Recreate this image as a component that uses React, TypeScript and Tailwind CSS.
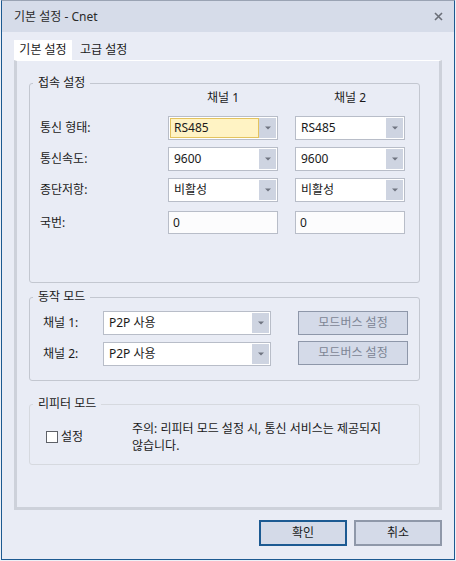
const FONT = "font-['Noto_Sans','Noto_Sans_CJK_KR',sans-serif]";

function Arrow() {
  return (
    <svg width="6" height="4" viewBox="0 0 6 4" className="block">
      <path d="M0 0.5h6L3 3.5z" fill="#6f7480" />
    </svg>
  );
}

function Combo({ value, width, highlight }: { value: string; width: string; highlight?: boolean }) {
  return (
    <div className={`${width} h-[24px] shrink-0 flex border border-[#b8bdc8] bg-white p-px`}>
      <div
        className={
          highlight
            ? "flex-1 flex items-center px-[3px] bg-[#fff3c4] border border-[#e3c35f]"
            : "flex-1 flex items-center px-[4px]"
        }
      >
        {value}
      </div>
      <div className="w-[17px] bg-[#ced4e1] flex items-center justify-center">
        <Arrow />
      </div>
    </div>
  );
}

function TextBox({ value }: { value: string }) {
  return (
    <div className="w-[110px] h-[23px] shrink-0 flex items-center border border-[#b8bdc8] bg-[#fcfcfd] px-[4px]">
      {value}
    </div>
  );
}

function Group({ title, className, children }: { title: string; className: string; children: React.ReactNode }) {
  return (
    <fieldset className={`w-[391px] rounded-[3px] border ${className}`}>
      <legend className="ml-[3px] px-[5px] leading-[16px]">{title}</legend>
      {children}
    </fieldset>
  );
}

const channelRows = [
  { label: "통신 형태:", a: "RS485", b: "RS485", hl: true },
  { label: "통신속도:", a: "9600", b: "9600" },
  { label: "종단저항:", a: "비활성", b: "비활성" },
];

export default function App() {
  return (
    <div className={`w-[456px] h-[561px] bg-[#eef1f7] text-[12px] text-[#1a1a1a] ${FONT}`}>
      <div className="ml-px w-[454px] h-[560px] flex flex-col border-x border-b border-t border-t-[#9aa3b3] border-x-[#1d5a91] border-b-[#1d5a91]">
        <div className="h-[31px] shrink-0 bg-[#d6dce9] flex items-center justify-between pl-[12px] pr-[11px] text-[#2a2a2a]">
          <span>기본 설정 - Cnet</span>
          <svg width="9" height="9" viewBox="0 0 9 9">
            <path d="M1 1l7 7M8 1L1 8" stroke="#6b6f78" strokeWidth="1.6" />
          </svg>
        </div>

        <div className="flex-1 bg-[#e9ecf5] pl-[12px] pt-[8px]">
          <div className="flex h-[20px] items-center">
            <div className="w-[58px] h-[20px] bg-white flex items-center justify-center">기본 설정</div>
            <div className="ml-[8px]">고급 설정</div>
          </div>

          <div className="w-[428px] h-[450px] border-t border-t-white border-x-[3px] border-b-[3px] border-x-[#cdd1da] border-b-[#cdd1da] pl-[12px] pt-[14px]">
            <Group title="접속 설정" className="h-[208px] border-[#c3c7d0]">
              <div className="flex pl-[138px] h-[14px] items-center">
                <div className="w-[110px] text-center">채널 1</div>
                <div className="ml-[17px] w-[110px] text-center">채널 2</div>
              </div>
              <div className="mt-[11px] flex flex-col gap-[7px]">
                {channelRows.map((r) => (
                  <div key={r.label} className="flex items-center">
                    <div className="ml-[10px] w-[128px] shrink-0">{r.label}</div>
                    <Combo value={r.a} width="w-[110px]" highlight={r.hl} />
                    <div className="ml-[17px]">
                      <Combo value={r.b} width="w-[110px]" />
                    </div>
                  </div>
                ))}
                <div className="mt-[2px] flex items-center">
                  <div className="ml-[10px] w-[128px] shrink-0">국번:</div>
                  <TextBox value="0" />
                  <div className="ml-[17px]">
                    <TextBox value="0" />
                  </div>
                </div>
              </div>
            </Group>

            <Group title="동작 모드" className="mt-[6px] h-[92px] border-[#c3c7d0]">
              <div className="mt-[6px] flex flex-col gap-[8px]">
                {["채널 1:", "채널 2:"].map((l, i) => (
                  <div key={l} className={`flex items-center ${i === 1 ? "-mt-px" : ""}`}>
                    <div className="ml-[13px] w-[60px] shrink-0">{l}</div>
                    <Combo value="P2P 사용" width="w-[168px]" />
                    <div
                      className={`ml-[27px] w-[110px] h-[24px] flex items-center justify-center bg-[#d4dae8] border border-[#8e97a9] text-[#7d8594] ${i === 1 ? "-mt-[2px]" : ""}`}
                    >
                      모드버스 설정
                    </div>
                  </div>
                ))}
              </div>
            </Group>

            <Group title="리피터 모드" className="mt-[15px] h-[69px] border-[#d6d9df]">
              <div className="flex items-start pt-[8px]">
                <div className="ml-[16px] w-[86px] shrink-0 pt-[8px] flex items-center">
                  <div className="w-[12px] h-[12px] border border-[#5e6168] bg-white" />
                  <span className="ml-[3px]">설정</span>
                </div>
                <div className="leading-[17px]">
                  주의: 리피터 모드 설정 시, 통신 서비스는 제공되지
                  <br />
                  않습니다.
                </div>
              </div>
            </Group>
          </div>

          <div className="mt-[10px] flex justify-end pr-[12px] gap-[7px]">
            <div className="w-[88px] h-[26px] flex items-center justify-center bg-[#d4dae8] border-2 border-[#1c5a92]">
              확인
            </div>
            <div className="w-[88px] h-[26px] flex items-center justify-center bg-[#d4dae8] border-2 border-[#8f98a9]">
              취소
            </div>
          </div>
        </div>
      </div>
    </div>
  );
}
